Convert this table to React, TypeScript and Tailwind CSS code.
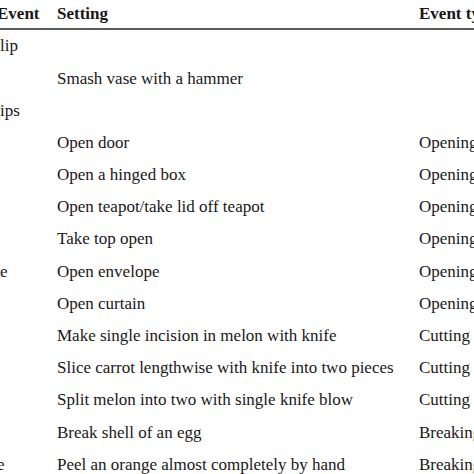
const rows: [string, string, string][] = [
  ['lip', '', ''],
  ['', 'Smash vase with a hammer', ''],
  ['ips', '', ''],
  ['', 'Open door', 'Opening'],
  ['', 'Open a hinged box', 'Opening'],
  ['', 'Open teapot/take lid off teapot', 'Opening'],
  ['', 'Take top open', 'Opening'],
  ['e', 'Open envelope', 'Opening'],
  ['', 'Open curtain', 'Opening'],
  ['', 'Make single incision in melon with knife', 'Cutting'],
  ['', 'Slice carrot lengthwise with knife into two pieces', 'Cutting'],
  ['', 'Split melon into two with single knife blow', 'Cutting'],
  ['', 'Break shell of an egg', 'Breaking'],
  ['e', 'Peel an orange almost completely by hand', 'Breaking'],
];

export default function App() {
  return (
    <div
      className="w-[474px] h-[474px] overflow-hidden bg-white text-[#1a1718] text-[17px]"
      style={{ fontFamily: '"Liberation Serif", "Times New Roman", serif' }}
    >
      {/* Header */}
      <div className="grid grid-cols-[57px_362px_1fr] h-[28px] items-center font-bold whitespace-nowrap">
        <div className="-ml-[3px]">Event</div>
        <div>Setting</div>
        <div>Event type</div>
      </div>
      <div className="h-[2px] bg-[#5a5a5a]" />

      {/* Body */}
      {rows.map(([event, setting, type], i) => (
        <div
          key={i}
          className="grid grid-cols-[57px_362px_1fr] h-[32.2px] items-center whitespace-nowrap"
        >
          <div className={i === rows.length - 1 ? '-ml-[3px]' : ''}>{event}</div>
          <div>{setting}</div>
          <div>{type}</div>
        </div>
      ))}
    </div>
  );
}
